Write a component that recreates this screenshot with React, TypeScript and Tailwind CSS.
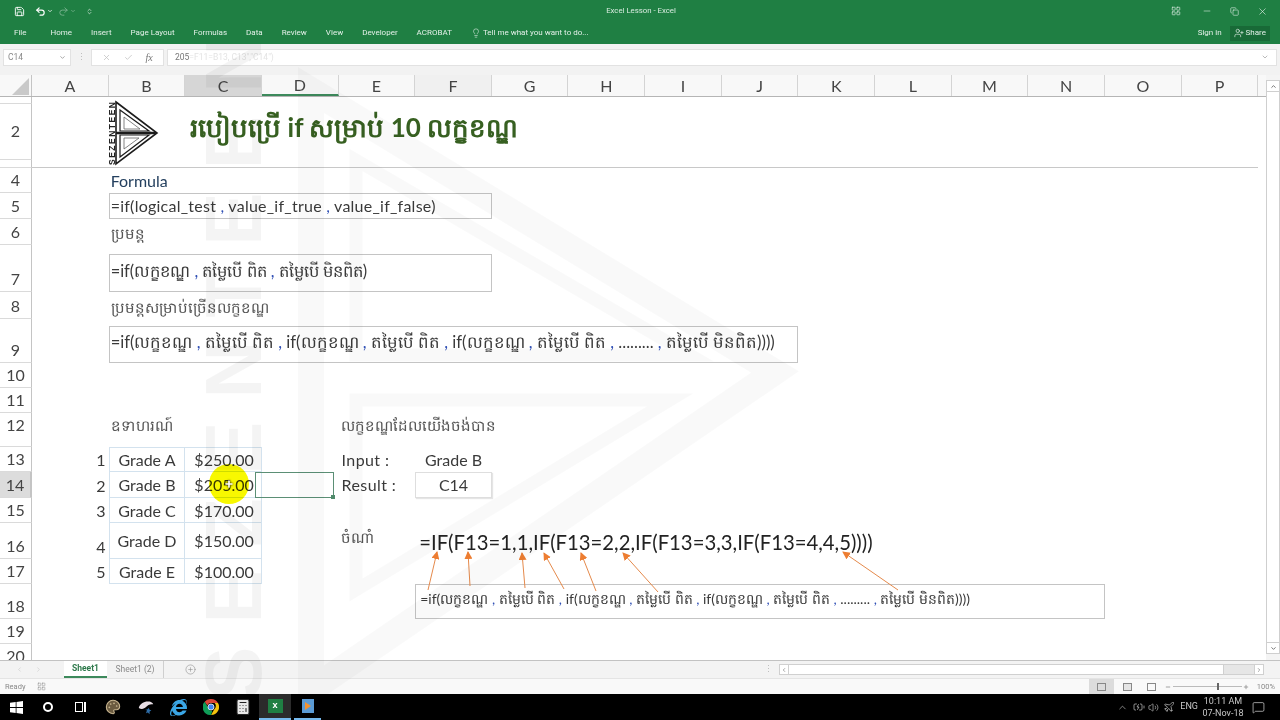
import { Save, Undo2, Redo2, Lightbulb, Minus, X, ChevronDown, ChevronUp, ChevronLeft, ChevronRight, Check, UserPlus, Plus, Volume2, Plane, MessageSquare, BatteryCharging, Calculator, Palette, ChevronsUpDown, CirclePlus, LayoutGrid, Copy } from "lucide-react";
import { FaInternetExplorer } from "react-icons/fa";

const tabs = ["Home", "Insert", "Page Layout", "Formulas", "Data", "Review", "View", "Developer", "ACROBAT"];

const cols = [
  { l: "A", c: "" },
  { l: "B", c: "" },
  { l: "C", c: "bg-[#d6d6d6]" },
  { l: "D", c: "border-b-2 border-b-[#3d8a5c]" },
  { l: "E", c: "" },
  { l: "F", c: "bg-[#f0f0f0]" },
  { l: "G", c: "" },
  { l: "H", c: "" },
  { l: "I", c: "" },
  { l: "J", c: "" },
  { l: "K", c: "" },
  { l: "L", c: "" },
  { l: "M", c: "" },
  { l: "N", c: "" },
  { l: "O", c: "" },
  { l: "P", c: "" },
];

const rows = [
  { l: "1", c: "row-start-1 items-end" },
  { l: "2", c: "row-start-2 items-center pb-[2px]" },
  { l: "3", c: "row-start-3 items-start" },
  { l: "4", c: "row-start-4 items-end" },
  { l: "5", c: "row-start-5 items-end" },
  { l: "6", c: "row-start-6 items-end" },
  { l: "7", c: "row-start-7 items-end" },
  { l: "8", c: "row-start-8 items-end" },
  { l: "9", c: "row-start-9 items-end" },
  { l: "10", c: "row-start-10 items-end" },
  { l: "11", c: "row-start-11 items-end" },
  { l: "12", c: "row-start-12 items-start" },
  { l: "13", c: "row-start-13 items-end" },
  { l: "14", c: "row-start-14 items-end bg-[#dcdcdc] border-r-2 border-r-[#3d8a5c]" },
  { l: "15", c: "row-start-15 items-end" },
  { l: "16", c: "row-start-16 items-end" },
  { l: "17", c: "row-start-17 items-end" },
  { l: "18", c: "row-start-18 items-end" },
  { l: "19", c: "row-start-19 items-end" },
  { l: "20", c: "row-start-20 items-start" },
];

const table = [
  { n: "1", g: "Grade A", v: "$250.00", nc: "row-start-13", gc: "row-start-13", vc: "row-start-13" },
  { n: "2", g: "Grade B", v: "$205.00", nc: "row-start-14", gc: "row-start-14", vc: "row-start-14" },
  { n: "3", g: "Grade C", v: "$170.00", nc: "row-start-15", gc: "row-start-15", vc: "row-start-15" },
  { n: "4", g: "Grade D", v: "$150.00", nc: "row-start-16", gc: "row-start-16", vc: "row-start-16" },
  { n: "5", g: "Grade E", v: "$100.00", nc: "row-start-17", gc: "row-start-17", vc: "row-start-17" },
];

const arrows = [
  [428, 590, 437, 552],
  [470, 586, 468, 552],
  [525, 588, 522, 553],
  [564, 589, 544, 553],
  [596, 591, 581, 553],
  [658, 592, 623, 553],
  [898, 590, 843, 552],
];

function Cm() {
  return <span className="text-[#2f4fb5] whitespace-pre">{" , "}</span>;
}

function Box({ className, children }: { className: string; children: React.ReactNode }) {
  return (
    <div className={"flex bg-white/70 border border-[#c4c4c4] whitespace-nowrap " + className}>
      <span>{children}</span>
    </div>
  );
}

function SheetLogo() {
  return (
    <svg viewBox="0 0 54 66" className="w-[54px] h-[66px]">
      <text
        transform="translate(8.5,65) rotate(-90)"
        textLength="63"
        className="font-['Liberation_Sans'] font-bold text-[8.5px]"
        fill="#222"
      >
        SEZENTEEN
      </text>
      <g fill="none" stroke="#1c1c1c">
        <path d="M10 2 L51 33 L10 64 Z" strokeWidth="1.6" />
        <path d="M14 10 L43 31 L14 31 Z" strokeWidth="1.2" />
        <path d="M18 17 L34 29 L18 29 Z" strokeWidth="0.8" stroke="#666" />
        <path d="M14 35 L43 35 L14 57 Z" strokeWidth="1.2" />
        <path d="M18 38 L33 38 L18 49 Z" strokeWidth="0.8" stroke="#666" />
        <path d="M10 33 L50 33" strokeWidth="2.4" />
      </g>
    </svg>
  );
}

function Watermark() {
  return (
    <svg
      viewBox="0 44 1280 650"
      className="absolute left-0 top-[44px] w-[1280px] h-[650px] pointer-events-none"
    >
      <text
        transform="translate(261,700) rotate(-90)"
        textLength="665"
        className="font-['Liberation_Sans'] font-bold text-[80px]"
        fill="#000"
        fillOpacity="0.045"
      >
        SEZENTEEN
      </text>
      <g fill="none" stroke="#000" strokeOpacity="0.022">
        <path d="M311 90 L775 372 L311 690 Z" strokeWidth="26" />
        <path d="M356 160 L690 355 L356 355 Z" strokeWidth="13" />
        <path d="M356 400 L670 400 L356 590 Z" strokeWidth="13" />
      </g>
    </svg>
  );
}

function WinLogo() {
  return (
    <svg viewBox="0 0 16 16" className="w-[13px] h-[13px]" fill="#fff">
      <path d="M0 2.3 7 1.3V7.5H0ZM8 1.2 16 0V7.5H8ZM0 8.5H7V14.7L0 13.7ZM8 8.5H16V16L8 14.8Z" />
    </svg>
  );
}

function Chrome() {
  return (
    <svg viewBox="0 0 20 20" className="w-[16px] h-[16px]">
      <path d="M10 0a10 10 0 0 1 8.7 5H10a5 5 0 0 0-4.6 3L2.1 3.3A10 10 0 0 1 10 0Z" fill="#db4437" />
      <path d="M18.7 5A10 10 0 0 1 10 20l4.3-7.5a5 5 0 0 0 .1-7.5Z" fill="#f4c20d" />
      <path d="M10 20A10 10 0 0 1 2.1 3.3L6 10a5 5 0 0 0 5.6 4.8Z" fill="#0f9d58" />
      <circle cx="10" cy="10" r="3.8" fill="#4285f4" stroke="#fff" />
    </svg>
  );
}

function BirdIcon() {
  return (
    <svg viewBox="0 0 20 20" className="w-[18px] h-[18px]">
      <path d="M2 11C3 6 9 3 14 4c2 .5 4 2 4 3-4-.5-6 1-8 3-2 2-5 3-8 1Z" fill="#e9dfe6" />
      <path d="M9 12l2 1 2-2 1 2 2 1-2 1v3l-2-2-2 1 1-3Z" fill="#2e6da8" />
    </svg>
  );
}

export default function App() {
  return (
    <div className="relative w-[1280px] h-[720px] overflow-hidden bg-white flex flex-col font-['Lato','Noto_Sans',sans-serif] text-[#3a3a3a]">
      {/* Title bar */}
      <div className="h-[22px] bg-[#1f7f43] flex items-center text-white font-['Roboto',sans-serif] text-[7.8px]">
        <div className="flex-1 flex items-center pl-[14px]">
          <Save size={11} strokeWidth={2} />
          <Undo2 size={11} strokeWidth={2.6} className="ml-[10px]" />
          <ChevronDown size={6} strokeWidth={3} className="ml-[1px]" />
          <Redo2 size={11} strokeWidth={2} className="ml-[5px] opacity-40" />
          <ChevronDown size={6} strokeWidth={3} className="ml-[1px] opacity-40" />
          <ChevronsUpDown size={7} strokeWidth={2} className="ml-[10px]" />
        </div>
        <span className="text-[#d8ebdf]">Excel Lesson - Excel</span>
        <div className="flex-1 flex items-center justify-end gap-[18px] pr-[12px] text-[#dfeee5]">
          <LayoutGrid size={10} strokeWidth={1.6} />
          <Minus size={10} strokeWidth={1.4} className="ml-[3px]" />
          <Copy size={9} strokeWidth={1.6} />
          <X size={11} strokeWidth={1.4} />
        </div>
      </div>

      {/* Ribbon tabs */}
      <div className="h-[22px] bg-[#1f7f43] flex items-center text-[#e3f0e8] font-['Roboto',sans-serif] text-[8px]">
        <span className="ml-[14px] mr-[24px]">File</span>
        <div className="flex items-center gap-[19px]">
          {tabs.map((t) => (
            <span key={t}>{t}</span>
          ))}
        </div>
        <Lightbulb size={10} strokeWidth={1.4} className="ml-[19px] mr-[2px]" />
        <span>Tell me what you want to do...</span>
        <span className="ml-auto mr-[8px]">Sign in</span>
        <div className="h-[15px] mr-[10px] px-[4px] bg-[#186a37] flex items-center gap-[2px]">
          <UserPlus size={10} strokeWidth={1.6} />
          <span>Share</span>
        </div>
      </div>

      {/* Formula bar */}
      <div className="h-[31px] bg-[#f2f2f2] flex items-center pb-[6px] pt-[1px] text-[#8a8a8a] font-['Roboto',sans-serif] text-[8.5px]">
        <div className="ml-[3px] w-[68px] h-[17px] bg-white border border-[#e2e2e2] flex items-center justify-between px-[4px]">
          <span>C14</span>
          <ChevronDown size={7} strokeWidth={2.5} />
        </div>
        <span className="w-[20px] text-center text-[#bbb]">⋮</span>
        <div className="w-[73px] h-[17px] bg-white border border-[#e2e2e2] flex items-center justify-around px-[4px] text-[#c0c0c0]">
          <X size={9} />
          <Check size={9} />
          <span className="italic font-['Liberation_Serif'] text-[10px] text-[#777]">fx</span>
        </div>
        <div className="ml-[3px] flex-1 mr-[3px] h-[17px] bg-white border border-[#e2e2e2] flex items-center px-[7px]">
          <span className="text-[#777]">205</span>
          <span className="text-[#e4e4e4]">=F11=B13, C13","C14")</span>
          <ChevronDown size={8} className="ml-auto text-[#999]" />
        </div>
      </div>

      {/* Sheet */}
      <div className="flex h-[585px] shrink-0">
        <div className="w-[1266px] flex flex-col">
          <div className="h-[22px] flex bg-[#f8f8f8] border-b border-b-[#b5b5b5] shrink-0">
            <div className="w-[32px] border-r border-r-[#c4c4c4] flex items-end justify-end pr-[2px] pb-[1px]">
              <div className="w-0 h-0 border-l-[17px] border-l-transparent border-b-[17px] border-b-[#c9c9c9]" />
            </div>
            {cols.map((c) => (
              <div
                key={c.l}
                className={"w-[76.65px] flex items-center justify-center border-r border-r-[#d4d4d4] text-[16px] text-[#444] " + c.c}
              >
                {c.l}
              </div>
            ))}
          </div>

          <div className="h-[563px] overflow-hidden grid grid-cols-[32px_repeat(16,76.65px)] grid-rows-[7px_56px_8px_25px_26px_26px_47px_27px_44px_25px_25px_34px_25px_26px_25px_36px_25px_35px_25px_25px]">
            {rows.map((r) => (
              <div
                key={r.l}
                className={"col-start-1 flex justify-center overflow-hidden leading-[24px] text-[16px] text-[#444] border-r border-r-[#c4c4c4] border-b border-b-[#dadada] " + r.c}
              >
                {r.l}
              </div>
            ))}

            {/* Freeze line */}
            <div className="col-start-2 col-span-16 row-start-3 self-end border-b border-b-[#c8c8c8]" />

            <div className="col-start-3 row-start-2 row-span-2 flex items-start -mt-[4px] -ml-[3px]">
              <SheetLogo />
            </div>
            <div className="col-start-4 col-span-6 row-start-2 flex items-center whitespace-nowrap pl-[5px] -mt-[9px] text-[26px] font-bold text-[#376021]">
              របៀបប្រើ if សម្រាប់ 10 លក្ខខណ្ឌ
            </div>

            <div className="col-start-3 row-start-4 flex items-end pl-[2px] text-[16px] leading-[24px] text-[#24405f]">Formula</div>
            <Box className="col-start-3 col-span-5 row-start-5 items-center pl-[1px] text-[16px] tracking-[0.25px]">
              =if(logical_test<Cm />value_if_true<Cm />value_if_false)
            </Box>
            <div className="col-start-3 col-span-2 row-start-6 flex items-end pl-[2px] text-[15px] leading-[24px] text-[#555]">ប្រមន្ត</div>
            <Box className="col-start-3 col-span-5 row-start-7 mt-[9px] items-center pl-[1px] pb-[4px] text-[16.4px]">
              =if(លក្ខខណ្ឌ<Cm />តម្លៃបើ ពិត<Cm />តម្លៃបើ មិនពិត)
            </Box>
            <div className="col-start-3 col-span-4 row-start-8 flex items-end pl-[2px] text-[15px] leading-[24px] text-[#555] whitespace-nowrap">ប្រមន្តសម្រាប់ច្រើនលក្ខខណ្ឌ</div>
            <Box className="col-start-3 col-span-9 row-start-9 mt-[7px] items-center pl-[1px] pb-[5px] text-[16.6px]">
              =if(លក្ខខណ្ឌ<Cm />តម្លៃបើ ពិត<Cm />if(លក្ខខណ្ឌ<Cm />តម្លៃបើ ពិត<Cm />if(លក្ខខណ្ឌ<Cm />តម្លៃបើ ពិត<Cm />.........<Cm />តម្លៃបើ មិនពិត))))
            </Box>

            <div className="col-start-3 col-span-2 row-start-12 flex items-start pl-[2px] text-[15px] leading-[24px] text-[#555]">ឧទាហរណ៍</div>
            <div className="col-start-6 col-span-3 row-start-12 flex items-start pl-[2px] text-[15px] leading-[24px] text-[#555] whitespace-nowrap">លក្ខខណ្ឌដែលយើងចង់បាន</div>

            {table.map((t) => (
              <div key={t.n} className="contents">
                <div className={"col-start-2 flex items-end justify-end pr-[3px] text-[16px] leading-[24px] " + t.nc}>{t.n}</div>
                <div className={"col-start-3 flex items-center justify-center pt-[1px] text-[16px] bg-white/60 border-b border-r border-l border-[#d3e2ee] " + t.gc}>{t.g}</div>
                <div className={"col-start-4 flex items-center justify-center pt-[1px] pl-[2px] text-[16px] bg-white/60 border-b border-r border-[#d3e2ee] " + t.vc}>{t.v}</div>
              </div>
            ))}
            <div className="col-start-3 col-span-2 row-start-13 self-start border-t border-t-[#d3e2ee]" />

            <div className="col-start-5 row-start-14 -ml-[7px] mr-[5px] border border-[#5b8f75] relative">
              <div className="absolute -right-[2px] -bottom-[2px] w-[4px] h-[4px] bg-[#4f8a6b]" />
            </div>

            <div className="col-start-6 row-start-13 flex items-end pl-[3px] text-[16px] leading-[24px] tracking-[0.4px]">Input :</div>
            <div className="col-start-6 row-start-14 flex items-end pl-[3px] pb-[1px] text-[16px] leading-[24px] tracking-[0.4px]">Result :</div>
            <div className="col-start-7 row-start-13 flex items-end justify-center text-[16px] leading-[24px]">Grade B</div>
            <div className="col-start-7 row-start-14 flex items-center justify-center text-[16px] border border-[#dedede] shadow-[1px_1px_1px_#e5e5e5]">C14</div>

            <div className="col-start-6 row-start-16 flex items-start pl-[2px] pt-[2px] text-[15px] leading-[24px] text-[#555]">ចំណាំ</div>
            <div className="col-start-7 col-span-7 row-start-16 flex items-end pl-[4px] pb-[3px] whitespace-nowrap text-[20.3px] leading-[28px] text-[#222]">
              =IF(F13=1,1,IF(F13=2,2,IF(F13=3,3,IF(F13=4,4,5))))
            </div>
            <Box className="col-start-7 col-span-9 row-start-18 items-center pl-[4px] pb-[6px] text-[14px]">
              =if(លក្ខខណ្ឌ<Cm />តម្លៃបើ ពិត<Cm />if(លក្ខខណ្ឌ<Cm />តម្លៃបើ ពិត<Cm />if(លក្ខខណ្ឌ<Cm />តម្លៃបើ ពិត<Cm />.........<Cm />តម្លៃបើ មិនពិត))))
            </Box>
          </div>
        </div>

        {/* Vertical scrollbar */}
        <div className="w-[14px] flex flex-col pt-[5px] pb-[6px] bg-[#f4f4f4]">
          <div className="h-[12px] bg-white border border-[#cfcfcf] flex items-center justify-center">
            <ChevronUp size={7} strokeWidth={3} className="text-[#666]" />
          </div>
          <div className="flex-1 bg-white border-x border-[#cfcfcf]" />
          <div className="h-[12px] bg-white border border-[#cfcfcf] flex items-center justify-center">
            <ChevronDown size={7} strokeWidth={3} className="text-[#666]" />
          </div>
        </div>
      </div>

      {/* Tabs bar */}
      <div className="h-[18px] bg-[#f3f3f3] border-t border-t-[#c2c2c2] flex items-center text-[8.5px] font-['Roboto',sans-serif] text-[#8a8a8a] shrink-0">
        <ChevronLeft size={7} className="ml-[16px] text-[#c8c8c8]" />
        <ChevronRight size={7} className="ml-[12px] text-[#c8c8c8]" />
        <div className="ml-[22px] w-[43px] h-full bg-white border-b-2 border-b-[#3d8a5c] flex items-center justify-center text-[#2f7a4c] font-bold">Sheet1</div>
        <div className="w-[57px] h-full flex items-center justify-center border-r border-r-[#cfcfcf]">Sheet1 (2)</div>
        <CirclePlus size={11} strokeWidth={1.2} className="ml-[21px]" />
        <span className="ml-auto text-[#bbb]">⋮</span>
        <div className="ml-[6px] mr-[16px] w-[485px] h-[11px] flex border border-[#d0d0d0] bg-[#e6e6e6]">
          <div className="w-[9px] bg-white border-r border-r-[#d0d0d0] flex items-center justify-center">
            <ChevronLeft size={6} strokeWidth={3} />
          </div>
          <div className="flex-1 bg-white mr-[30px] border-r border-r-[#d0d0d0]" />
          <div className="w-[9px] bg-white border-l border-l-[#d0d0d0] flex items-center justify-center">
            <ChevronRight size={6} strokeWidth={3} />
          </div>
        </div>
      </div>

      {/* Status bar */}
      <div className="h-[16px] bg-[#f9f9f9] border-t border-t-[#e4e4e4] flex items-center text-[7.5px] font-['Roboto',sans-serif] text-[#8a8a8a] shrink-0">
        <span className="ml-[5px]">Ready</span>
        <LayoutGrid size={9} strokeWidth={1.4} className="ml-[12px]" />
        <div className="ml-auto w-[25px] h-full bg-[#dcdcdc] flex items-center justify-center">
          <div className="w-[9px] h-[8px] border border-[#888]" />
        </div>
        <div className="ml-[9px] w-[9px] h-[8px] border border-[#888] bg-[#e5e5e5]" />
        <div className="ml-[15px] w-[9px] h-[8px] border border-[#888]" />
        <Minus size={6} strokeWidth={3} className="ml-[9px]" />
        <div className="relative ml-[2px] w-[69px] h-px bg-[#bbb]">
          <div className="absolute left-[44px] -top-[3px] w-[2px] h-[7px] bg-[#666]" />
        </div>
        <Plus size={6} strokeWidth={3} className="ml-[1px]" />
        <span className="ml-[8px] mr-[5px]">100%</span>
      </div>

      {/* Taskbar */}
      <div className="h-[26px] bg-black flex items-center font-['Roboto',sans-serif] text-[9px] text-[#d8d8d8] shrink-0">
        <div className="w-[32px] flex justify-center"><WinLogo /></div>
        <div className="w-[32px] flex justify-center">
          <div className="w-[10px] h-[10px] rounded-full border-2 border-white" />
        </div>
        <div className="w-[32px] flex justify-center">
          <div className="w-[8px] h-[10px] border border-white" />
          <div className="ml-[1px] w-[2px] h-[10px] bg-white" />
        </div>
        <div className="w-[33px] flex justify-center">
          <Palette size={16} strokeWidth={1.6} className="text-[#c9b691] fill-[#6b5b40]" />
        </div>
        <div className="w-[33px] flex justify-center"><BirdIcon /></div>
        <div className="w-[33px] flex justify-center">
          <FaInternetExplorer size={17} className="text-[#3aa6e6]" />
        </div>
        <div className="w-[31px] flex justify-center"><Chrome /></div>
        <div className="w-[33px] flex justify-center">
          <Calculator size={18} strokeWidth={1.4} className="text-[#222] fill-[#e8e8e8]" />
        </div>
        <div className="w-[32px] h-full bg-[#2b2b2b] border-b-2 border-b-[#76b9ed] flex items-center justify-center">
          <div className="w-[15px] h-[14px] bg-[#1f7f43] text-white text-[8px] font-bold flex items-center justify-center">X</div>
        </div>
        <div className="ml-[3px] w-[27px] h-full border-b-2 border-b-[#76b9ed] flex items-center justify-center">
          <div className="w-[12px] h-[14px] bg-[#5b9bd5] flex items-center justify-center">
            <div className="w-0 h-0 border-l-[6px] border-l-[#f59331] border-y-[4px] border-y-transparent" />
          </div>
        </div>
        <div className="ml-auto flex items-center text-[#c8c8c8]">
          <ChevronUp size={11} strokeWidth={1.4} />
          <BatteryCharging size={12} strokeWidth={1.4} className="ml-[5px]" />
          <Volume2 size={11} strokeWidth={1.4} className="ml-[3px]" />
          <Plane size={12} strokeWidth={1.4} className="ml-[4px]" />
          <span className="ml-[5px]">ENG</span>
          <div className="ml-[3px] w-[44px] flex flex-col items-center leading-[12px]">
            <span>10:11 AM</span>
            <span>07-Nov-18</span>
          </div>
          <MessageSquare size={13} strokeWidth={1.4} className="ml-[7px] mr-[15px]" />
        </div>
      </div>

      {/* Annotation arrows over the sheet */}
      <svg viewBox="0 0 1280 720" className="absolute inset-0 w-[1280px] h-[720px] pointer-events-none">
        <defs>
          <marker id="ah" markerWidth="8" markerHeight="8" refX="7" refY="4" orient="auto" markerUnits="userSpaceOnUse">
            <path d="M0 0 L8 4 L0 8 Z" fill="#ed7d31" />
          </marker>
        </defs>
        {arrows.map((a) => (
          <line key={a[0]} x1={a[0]} y1={a[1]} x2={a[2]} y2={a[3]} stroke="#e58a4c" strokeWidth="1" markerEnd="url(#ah)" />
        ))}
      </svg>

      {/* Recording cursor highlight */}
      <div className="absolute left-[209px] top-[464px] w-[40px] h-[40px] rounded-full bg-[#f8f800] mix-blend-multiply pointer-events-none" />
      <div className="absolute left-[224px] top-[479px] text-white pointer-events-none">
        <Plus size={10} strokeWidth={4} className="text-white drop-shadow-[0_0_1px_#000]" />
      </div>

      <Watermark />
    </div>
  );
}
